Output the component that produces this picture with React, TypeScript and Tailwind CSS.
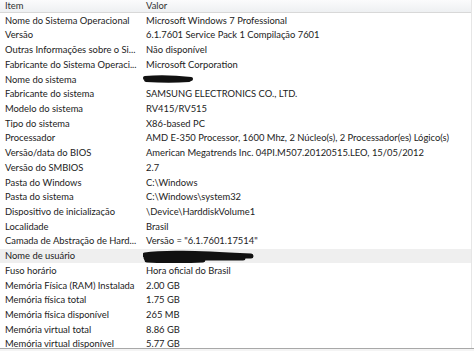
const rows: [string, string][] = [
  ["Nome do Sistema Operacional", "Microsoft Windows 7 Professional"],
  ["Versão", "6.1.7601 Service Pack 1 Compilação 7601"],
  ["Outras Informações sobre o Si...", "Não disponível"],
  ["Fabricante do Sistema Operaci...", "Microsoft Corporation"],
  ["Nome do sistema", "#redacted-short"],
  ["Fabricante do sistema", "SAMSUNG ELECTRONICS CO., LTD."],
  ["Modelo do sistema", "RV415/RV515"],
  ["Tipo do sistema", "X86-based PC"],
  ["Processador", "AMD E-350 Processor, 1600 Mhz, 2 Núcleo(s), 2 Processador(es) Lógico(s)"],
  ["Versão/data do BIOS", "American Megatrends Inc. 04PI.M507.20120515.LEO, 15/05/2012"],
  ["Versão do SMBIOS", "2.7"],
  ["Pasta do Windows", "C:\\Windows"],
  ["Pasta do sistema", "C:\\Windows\\system32"],
  ["Dispositivo de inicialização", "\\Device\\HarddiskVolume1"],
  ["Localidade", "Brasil"],
  ["Camada de Abstração de Hard...", "Versão = \"6.1.7601.17514\""],
  ["Nome de usuário", "#redacted-long"],
  ["Fuso horário", "Hora oficial do Brasil"],
  ["Memória Física (RAM) Instalada", "2.00 GB"],
  ["Memória física total", "1.75 GB"],
  ["Memória física disponível", "265 MB"],
  ["Memória virtual total", "8.86 GB"],
  ["Memória virtual disponível", "5.77 GB"],
];

function Scribble({ long }: { long?: boolean }) {
  if (long) {
    return (
      <svg width="112" height="14" viewBox="0 0 112 14" className="block">
        <path d="M2 6 C20 3 50 4 108 7 M3 9 C30 8 60 9 100 9 M4 11 C20 12 40 12 60 11" stroke="#111" strokeWidth="5" fill="none" strokeLinecap="round" />
      </svg>
    );
  }
  return (
    <svg width="52" height="10" viewBox="0 0 52 10" className="block">
      <path d="M2 4 C14 3 30 3 48 5 M3 6 C18 7 34 7 46 6" stroke="#111" strokeWidth="4" fill="none" strokeLinecap="round" />
    </svg>
  );
}

export default function App() {
  return (
    <div
      className="flex h-[351px] w-[474px] flex-col overflow-hidden bg-white text-[9.4px] text-[#222]"
      style={{ fontFamily: 'Lato, "Noto Sans", sans-serif' }}
    >
      <div className="h-[348px] overflow-hidden">
        <div className="w-[472px] border-r border-[#e6e6e6]">
          <div className="flex h-[13px] items-center border-b border-[#d8d8d8] bg-gradient-to-b from-[#fbfbfc] to-[#eef0f2] leading-none text-[#333]">
            <div className="w-[141px] pl-[5px]">Item</div>
            <div className="pl-[5px]">Valor</div>
          </div>
          {rows.map(([k, v], i) => (
            <div
              key={i}
              className={`flex h-[14.73px] items-center whitespace-nowrap leading-none ${
                v === "#redacted-long" ? "bg-[#efefef]" : ""
              }`}
            >
              <div className="w-[141px] shrink-0 overflow-hidden pl-[5px]">{k}</div>
              <div className="pl-[5px]">
                {v === "#redacted-short" ? (
                  <div className="-ml-[3px]">
                    <Scribble />
                  </div>
                ) : v === "#redacted-long" ? (
                  <div className="-ml-[3px]">
                    <Scribble long />
                  </div>
                ) : (
                  v
                )}
              </div>
            </div>
          ))}
        </div>
      </div>
      <div className="h-[1px] bg-[#a8a8a8]" />
      <div className="flex-1 bg-[#f4f4f4]" />
    </div>
  );
}
